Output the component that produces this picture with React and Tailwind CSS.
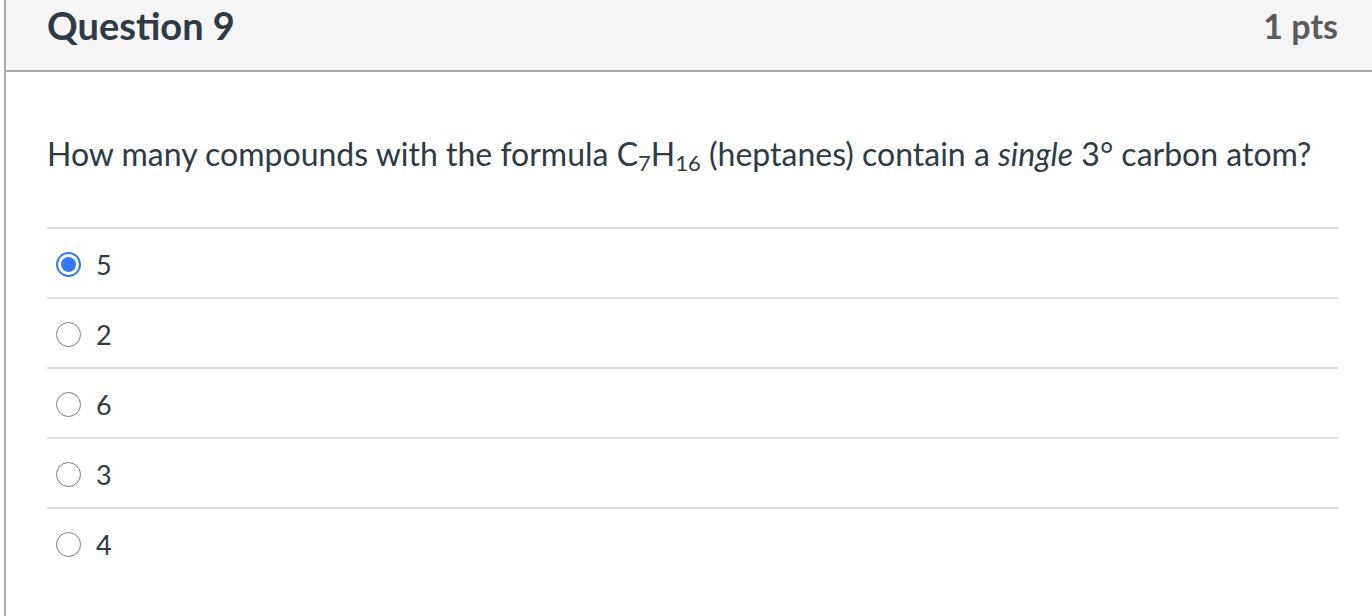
const answers = [
  { label: "5", selected: true },
  { label: "2" },
  { label: "6" },
  { label: "3" },
  { label: "4" },
];

const Radio = ({ selected }) => {
  if (selected) {
    return (
      <span className="w-[25px] h-[25px] rounded-full border-[2px] border-[#3478f6] flex items-center justify-center shrink-0">
        <span className="w-[15px] h-[15px] rounded-full bg-[#3478f6]" />
      </span>
    );
  }
  return (
    <span className="w-[25px] h-[25px] rounded-full border-[1.5px] border-[#7b7b7b] bg-white shrink-0" />
  );
};

const App = () => {
  return (
    <div
      className="w-[1372px] h-[616px] overflow-hidden bg-white pl-[4px]"
      style={{ fontFamily: "Lato, 'Liberation Sans', sans-serif" }}
    >
      <div className="h-full border-l-2 border-[#aaaaaa]">
        {/* header */}
        <div className="h-[72px] bg-[#f5f5f5] border-b-2 border-[#aaaaaa] flex items-start justify-between pl-[41px] pr-[34px]">
          <h2 className="text-[38px] font-bold text-[#2d3b45] leading-none mt-[6px]">
            Question 9
          </h2>
          <span className="text-[34px] font-bold text-[#5b5b5b] leading-none mt-[9px]">
            1 pts
          </span>
        </div>

        {/* body */}
        <div className="pl-[41px] pr-[34px]">
          <p className="text-[32px] text-[#2d3b45] leading-none pt-[66px] pb-[57px]">
            How many compounds with the formula C
            <sub className="text-[22px] relative top-[5px] align-baseline">7</sub>H
            <sub className="text-[22px] relative top-[5px] align-baseline">16</sub>{" "}
            (heptanes) contain a <em>single</em> 3° carbon atom?
          </p>

          <div>
            {answers.map((a) => (
              <div
                key={a.label}
                className="h-[70px] border-t-2 border-[#dddddd] flex items-center pt-[3px] pl-[9px] gap-[15px]"
              >
                <Radio selected={a.selected} />
                <span className="text-[27px] text-[#2d3b45] leading-none">{a.label}</span>
              </div>
            ))}
          </div>
        </div>
      </div>
    </div>
  );
};

export default App;
